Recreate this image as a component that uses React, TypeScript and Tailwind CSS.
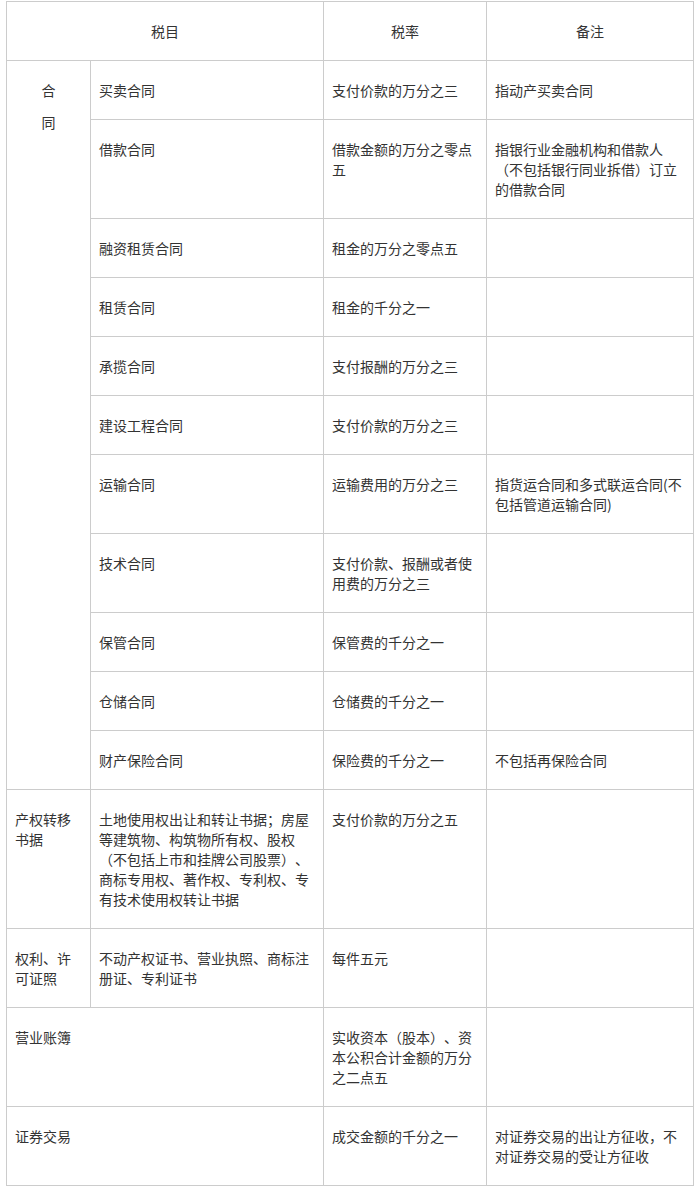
import React from "react";

const td = "border border-[#cccccc] align-top px-[8px] pt-[19px] pb-[19px] leading-[20px]";

type Row = { name: string; rate: string; note?: string };

const contracts: Row[] = [
  { name: "买卖合同", rate: "支付价款的万分之三", note: "指动产买卖合同" },
  { name: "借款合同", rate: "借款金额的万分之零点五", note: "指银行业金融机构和借款人（不包括银行同业拆借）订立的借款合同" },
  { name: "融资租赁合同", rate: "租金的万分之零点五" },
  { name: "租赁合同", rate: "租金的千分之一" },
  { name: "承揽合同", rate: "支付报酬的万分之三" },
  { name: "建设工程合同", rate: "支付价款的万分之三" },
  { name: "运输合同", rate: "运输费用的万分之三", note: "指货运合同和多式联运合同(不包括管道运输合同)" },
  { name: "技术合同", rate: "支付价款、报酬或者使用费的万分之三" },
  { name: "保管合同", rate: "保管费的千分之一" },
  { name: "仓储合同", rate: "仓储费的千分之一" },
  { name: "财产保险合同", rate: "保险费的千分之一", note: "不包括再保险合同" },
];

export default function App() {
  return (
    <div
      className="bg-white pl-[6px] pt-[1px] text-[14px] text-[#333333] [text-spacing-trim:space-all]"
      style={{ fontFamily: '"Noto Sans CJK SC", "Noto Sans", sans-serif' }}
    >
      <table className="border-collapse table-fixed w-[687px]">
        <colgroup>
          <col className="w-[84px]" />
          <col className="w-[233px]" />
          <col className="w-[163px]" />
          <col className="w-[207px]" />
        </colgroup>
        <tbody>
          <tr>
            <td colSpan={2} className="border border-[#cccccc] text-center align-middle py-[19px] leading-[20px]">
              税目
            </td>
            <td className="border border-[#cccccc] text-center align-middle py-[19px] leading-[20px]">税率</td>
            <td className="border border-[#cccccc] text-center align-middle py-[19px] leading-[20px]">备注</td>
          </tr>
          {contracts.map((r, i) => (
            <tr key={r.name}>
              {i === 0 && (
                <td rowSpan={contracts.length} className={td + " text-center"}>
                  <div className="flex flex-col items-center gap-[12px]">
                    <span>合</span>
                    <span>同</span>
                  </div>
                </td>
              )}
              <td className={td}>{r.name}</td>
              <td className={td}>{r.rate}</td>
              <td className={td}>{r.note ?? ""}</td>
            </tr>
          ))}
          <tr>
            <td className={td}>产权转移书据</td>
            <td className={td}>
              土地使用权出让和转让书据；房屋等建筑物、构筑物所有权、股权（不包括上市和挂牌公司股票）、商标专用权、著作权、专利权、专有技术使用权转让书据
            </td>
            <td className={td}>支付价款的万分之五</td>
            <td className={td}></td>
          </tr>
          <tr>
            <td className={td}>权利、许可证照</td>
            <td className={td}>不动产权证书、营业执照、商标注册证、专利证书</td>
            <td className={td}>每件五元</td>
            <td className={td}></td>
          </tr>
          <tr>
            <td colSpan={2} className={td}>营业账簿</td>
            <td className={td}>实收资本（股本）、资本公积合计金额的万分之二点五</td>
            <td className={td}></td>
          </tr>
          <tr>
            <td colSpan={2} className={td}>证券交易</td>
            <td className={td}>成交金额的千分之一</td>
            <td className={td}>对证券交易的出让方征收，不对证券交易的受让方征收</td>
          </tr>
        </tbody>
      </table>
    </div>
  );
}
